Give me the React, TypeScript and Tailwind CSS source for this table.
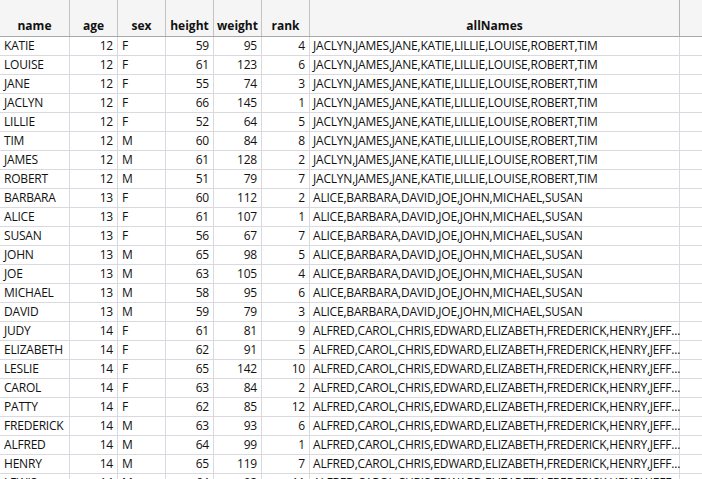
import React from 'react';

type Row = [string, number, string, number, number, number];

const rows: Row[] = [
  ['KATIE', 12, 'F', 59, 95, 4],
  ['LOUISE', 12, 'F', 61, 123, 6],
  ['JANE', 12, 'F', 55, 74, 3],
  ['JACLYN', 12, 'F', 66, 145, 1],
  ['LILLIE', 12, 'F', 52, 64, 5],
  ['TIM', 12, 'M', 60, 84, 8],
  ['JAMES', 12, 'M', 61, 128, 2],
  ['ROBERT', 12, 'M', 51, 79, 7],
  ['BARBARA', 13, 'F', 60, 112, 2],
  ['ALICE', 13, 'F', 61, 107, 1],
  ['SUSAN', 13, 'F', 56, 67, 7],
  ['JOHN', 13, 'M', 65, 98, 5],
  ['JOE', 13, 'M', 63, 105, 4],
  ['MICHAEL', 13, 'M', 58, 95, 6],
  ['DAVID', 13, 'M', 59, 79, 3],
  ['JUDY', 14, 'F', 61, 81, 9],
  ['ELIZABETH', 14, 'F', 62, 91, 5],
  ['LESLIE', 14, 'F', 65, 142, 10],
  ['CAROL', 14, 'F', 63, 84, 2],
  ['PATTY', 14, 'F', 62, 85, 12],
  ['FREDERICK', 14, 'M', 63, 93, 6],
  ['ALFRED', 14, 'M', 64, 99, 1],
  ['HENRY', 14, 'M', 65, 119, 7],
  ['LEWIS', 14, 'M', 64, 92, 11],
];

const namesByAge: Record<number, string> = {
  12: 'JACLYN,JAMES,JANE,KATIE,LILLIE,LOUISE,ROBERT,TIM',
  13: 'ALICE,BARBARA,DAVID,JOE,JOHN,MICHAEL,SUSAN',
  14: 'ALFRED,CAROL,CHRIS,EDWARD,ELIZABETH,FREDERICK,HENRY,JEFF...',
};

const font = "font-['Segoe_UI','Open_Sans',sans-serif]";

export default function App() {
  return (
    <div className={`w-[702px] h-[479px] overflow-hidden bg-white text-[12px] text-[#111] ${font}`}>
      {/* Column headers */}
      <div className="flex h-[37px] bg-[#f5f5f5] border-b border-[#a9a9a9] font-bold leading-none">
        <div className="w-[70px] shrink-0 border-r border-[#c4c4c4] flex items-end justify-center pb-[4px]">name</div>
        <div className="w-[48px] shrink-0 border-r border-[#c4c4c4] flex items-end justify-center pb-[4px]">age</div>
        <div className="w-[48px] shrink-0 border-r border-[#c4c4c4] flex items-end justify-center pb-[4px]">sex</div>
        <div className="w-[48px] shrink-0 border-r border-[#c4c4c4] flex items-end justify-center pb-[4px]">height</div>
        <div className="w-[48px] shrink-0 border-r border-[#c4c4c4] flex items-end justify-center pb-[4px]">weight</div>
        <div className="w-[48px] shrink-0 border-r border-[#c4c4c4] flex items-end justify-center pb-[4px]">rank</div>
        <div className="w-[370px] shrink-0 border-r border-[#b4b4b4] flex items-end justify-center pb-[4px]">allNames</div>
        <div className="flex-1" />
      </div>

      {rows.map(([name, age, sex, height, weight, rank]) => (
        <div key={name} className="flex h-[19px] border-b border-[#d9d9df] leading-[18px] tracking-[-0.2px]">
          <div className="w-[70px] shrink-0 border-r border-[#d9d9df] pl-[4px]">{name}</div>
          <div className="w-[48px] shrink-0 border-r border-[#d9d9df] pr-[4px] text-right">{age}</div>
          <div className="w-[48px] shrink-0 border-r border-[#d9d9df] pl-[4px]">{sex}</div>
          <div className="w-[48px] shrink-0 border-r border-[#d9d9df] pr-[4px] text-right">{height}</div>
          <div className="w-[48px] shrink-0 border-r border-[#d9d9df] pr-[4px] text-right">{weight}</div>
          <div className="w-[48px] shrink-0 border-r border-[#d9d9df] pr-[4px] text-right">{rank}</div>
          <div className="w-[370px] shrink-0 border-r border-[#d9d9df] pl-[3px] whitespace-nowrap">
            {namesByAge[age]}
          </div>
          <div className="flex-1" />
        </div>
      ))}
    </div>
  );
}
